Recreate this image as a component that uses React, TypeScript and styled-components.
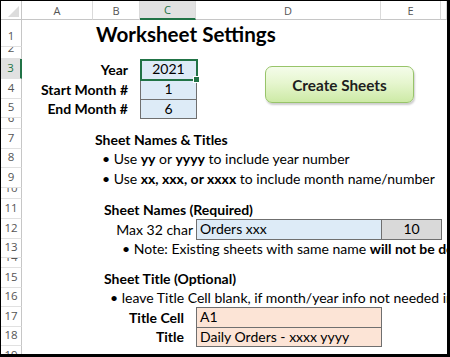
import React from 'react';
import styled, { createGlobalStyle } from 'styled-components';

const GlobalStyle = createGlobalStyle`
  html, body {
    margin: 0;
    padding: 0;
    background: #fff;
  }
`;

const GREEN = '#217346';
const ROW_HEIGHTS = [27, 12, 20, 20, 19, 11, 20, 19, 20, 11, 20, 20, 19, 10, 20, 19, 20, 19, 20];
const COLUMNS = ['A', 'B', 'C', 'D', 'E', ''];

const Frame = styled.div`
  width: 450px;
  height: 357px;
  box-sizing: border-box;
  border-style: solid;
  border-color: #000;
  border-width: 1px 3px 3px 1px;
  background: #fff;
  overflow: hidden;
`;

const Sheet = styled.div`
  display: grid;
  grid-template-columns: 21px 71px 47px 56px 185px 60px 1fr;
  grid-template-rows: 19px ${ROW_HEIGHTS.map((h) => h + 'px').join(' ')};
  font-family: Lato, 'Liberation Sans', sans-serif;
  font-size: 14px;
  color: #000;
`;

const Corner = styled.div`
  grid-row: 1;
  grid-column: 1;
  position: relative;
  border-right: 1px solid #c6c6c6;
  border-bottom: 1px solid #c6c6c6;
  box-sizing: border-box;
  &::after {
    content: '';
    position: absolute;
    right: 2px;
    bottom: 2px;
    border-style: solid;
    border-width: 0 0 11px 11px;
    border-color: transparent transparent #dcdcdc transparent;
  }
`;

const ColHead = styled.div<{ $col: number; $sel?: boolean }>`
  grid-row: 1;
  grid-column: ${(p) => p.$col};
  box-sizing: border-box;
  display: flex;
  align-items: center;
  justify-content: center;
  background: ${(p) => (p.$sel ? '#e1e1e1' : '#fff')};
  border-right: 1px solid #dadada;
  border-bottom: ${(p) => (p.$sel ? `2px solid ${GREEN}` : '1px solid #c6c6c6')};
  font-family: 'Open Sans', 'Noto Sans', sans-serif;
  font-size: 11px;
  color: ${(p) => (p.$sel ? GREEN : '#555')};
`;

const RowHead = styled.div<{ $row: number; $sel?: boolean }>`
  grid-row: ${(p) => p.$row + 1};
  grid-column: 1;
  box-sizing: border-box;
  display: flex;
  align-items: flex-end;
  justify-content: center;
  padding-bottom: 2px;
  overflow: hidden;
  background: ${(p) => (p.$sel ? '#e1e1e1' : '#fff')};
  border-right: ${(p) => (p.$sel ? `2px solid ${GREEN}` : '1px solid #c6c6c6')};
  border-bottom: 1px solid #e1e1e1;
  font-family: 'Open Sans', 'Noto Sans', sans-serif;
  font-size: 11.5px;
  line-height: 16px;
  color: ${(p) => (p.$sel ? GREEN : '#555')};
`;

const Cell = styled.div<{ $row: number; $cols: string; $right?: boolean; $pad?: number; $bold?: boolean }>`
  grid-row: ${(p) => p.$row + 1};
  grid-column: ${(p) => p.$cols};
  align-self: end;
  line-height: 19px;
  white-space: nowrap;
  overflow: hidden;
  text-align: ${(p) => (p.$right ? 'right' : 'left')};
  ${(p) => (p.$right ? 'padding-right' : 'padding-left')}: ${(p) => p.$pad ?? 0}px;
  font-weight: ${(p) => (p.$bold ? 700 : 400)};
`;

const Title = styled(Cell)`
  font-size: 20.6px;
  line-height: 26px;
`;

const Box = styled.div<{ $row: number; $col: number; $bg: string; $center?: boolean }>`
  grid-row: ${(p) => p.$row + 1};
  grid-column: ${(p) => p.$col};
  margin: 0 -1px -1px 0;
  box-sizing: border-box;
  border: 1px solid #6f6f6f;
  background: ${(p) => p.$bg};
  padding: 0 3px;
  line-height: 18px;
  white-space: nowrap;
  overflow: hidden;
  text-align: ${(p) => (p.$center ? 'center' : 'left')};
`;

const Selection = styled.div<{ $row: number; $col: number }>`
  grid-row: ${(p) => p.$row + 1};
  grid-column: ${(p) => p.$col};
  position: relative;
  margin: 0 -2px -2px 0;
  border: 2px solid ${GREEN};
  pointer-events: none;
`;

const Handle = styled.span`
  position: absolute;
  right: -4px;
  bottom: -4px;
  width: 5px;
  height: 5px;
  background: ${GREEN};
  border: 1px solid #fff;
`;

const ShapeButton = styled.button`
  grid-row: 4 / 7;
  grid-column: 5 / 7;
  align-self: start;
  justify-self: start;
  margin: 7px 0 0 69px;
  width: 149px;
  height: 37px;
  border: 1px solid #98c46a;
  border-radius: 7px;
  background: linear-gradient(#f4fcea 0%, #e6f6cf 45%, #cdeaa6 100%);
  box-shadow: 1px 2px 2px rgba(0, 0, 0, 0.2);
  font-family: Lato, 'Liberation Sans', sans-serif;
  font-weight: 700;
  font-size: 15.3px;
  color: #1e1e1e;
  padding: 0;
  cursor: pointer;
`;

const App = () => {
  return (
    <Frame>
      <GlobalStyle />
      <Sheet>
        <Corner />
        {COLUMNS.map((c, i) => (
          <ColHead key={i} $col={i + 2} $sel={c === 'C'}>
            {c}
          </ColHead>
        ))}
        {ROW_HEIGHTS.map((_, i) => (
          <RowHead key={i} $row={i + 1} $sel={i + 1 === 3}>
            {i + 1}
          </RowHead>
        ))}

        <Title $row={1} $cols="3 / -1" $pad={3} $bold>
          Worksheet Settings
        </Title>

        <Cell $row={3} $cols="2 / 4" $right $pad={12} $bold>Year</Cell>
        <Cell $row={4} $cols="2 / 4" $right $pad={12} $bold>Start Month #</Cell>
        <Cell $row={5} $cols="2 / 4" $right $pad={12} $bold>End Month #</Cell>
        <Box $row={3} $col={4} $bg="#ddebf7" $center>2021</Box>
        <Box $row={4} $col={4} $bg="#ddebf7" $center>1</Box>
        <Box $row={5} $col={4} $bg="#ddebf7" $center>6</Box>
        <Selection $row={3} $col={4}>
          <Handle />
        </Selection>

        <ShapeButton>Create Sheets</ShapeButton>

        <Cell $row={7} $cols="3 / -1" $pad={2} $bold>Sheet Names &amp; Titles</Cell>
        <Cell $row={8} $cols="3 / -1" $pad={9}>
          • Use <b>yy</b> or <b>yyyy</b> to include year number
        </Cell>
        <Cell $row={9} $cols="3 / -1" $pad={9}>
          • Use <b>xx, xxx, or xxxx</b> to include month name/number
        </Cell>

        <Cell $row={11} $cols="3 / -1" $pad={11} $bold>Sheet Names (Required)</Cell>
        <Cell $row={12} $cols="2 / 5" $right $pad={3}>Max 32 char</Cell>
        <Box $row={12} $col={5} $bg="#ddebf7">Orders xxx</Box>
        <Box $row={12} $col={6} $bg="#d9d9d9" $center>10</Box>
        <Cell $row={13} $cols="3 / -1" $pad={29}>
          • Note: Existing sheets with same name <b>will not be deleted</b>
        </Cell>

        <Cell $row={15} $cols="3 / -1" $pad={11} $bold>Sheet Title (Optional)</Cell>
        <Cell $row={16} $cols="3 / -1" $pad={17}>
          • leave Title Cell blank, if month/year info not needed in title
        </Cell>
        <Cell $row={17} $cols="2 / 5" $right $pad={12} $bold>Title Cell</Cell>
        <Cell $row={18} $cols="2 / 5" $right $pad={12} $bold>Title</Cell>
        <Box $row={17} $col={5} $bg="#fce4d6">A1</Box>
        <Box $row={18} $col={5} $bg="#fce4d6">Daily Orders - xxxx yyyy</Box>
      </Sheet>
    </Frame>
  );
};

export default App;
